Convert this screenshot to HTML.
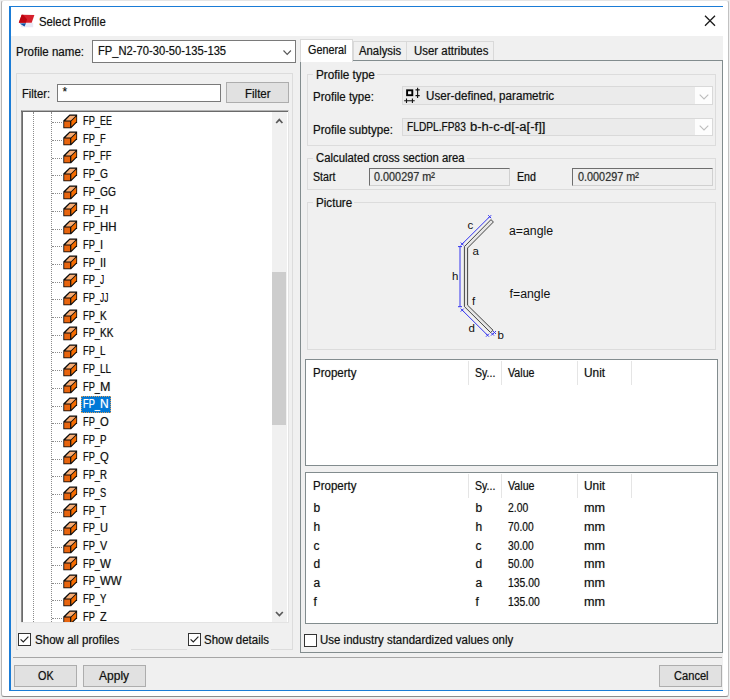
<!DOCTYPE html>
<html lang="en"><head><meta charset="utf-8"><title>Select Profile</title>
<style>
html,body{margin:0;padding:0;}
body{width:730px;height:699px;overflow:hidden;background:#efefef;font-family:"Liberation Sans",sans-serif;font-size:12px;position:relative;}
#frame{position:absolute;left:1px;top:0;width:726px;height:695px;background:#fff;border:1px solid;border-color:#e6e6e6 #c2c2c2 #8c8c8c #b4b4b4;border-radius:3px;}
#win{position:absolute;left:0;top:0;width:730px;height:699px;}
.b{position:absolute;box-sizing:border-box;}
.t{text-shadow:0 0 0.8px rgba(0,0,0,0.42);position:absolute;white-space:nowrap;line-height:16px;height:16px;transform-origin:0 50%;display:block;}
svg{position:absolute;overflow:visible;}
.btn{background:#e1e1e1;border:1px solid #adadad;}
.grp{border:1px solid #dcdcdc;}
.leg{background:#f0f0f0;}
.cb{background:#fff;border:1px solid #333;}
.p{display:inline-block;vertical-align:top;white-space:pre;transform-origin:0 50%;height:16px;line-height:16px;}

</style></head>
<body>
<div id="frame"></div>
<div id="win">
<div class="b " style="left:9.0px;top:6.0px;width:714.3px;height:685.0px;background:#f0f0f0;border-left:2px solid #1b7cd6;border-top:1px solid #1b7cd6;border-bottom:1px solid #1b7cd6;"></div>
<div class="b " style="left:11.0px;top:7.0px;width:712.3px;height:29.3px;background:#fff;"></div>
<svg style="left:18px;top:13px" width="18" height="15" viewBox="0 0 18 15">
<polygon points="2.4,9.8 15.2,9.8 15.2,14.2 3.2,14.2" fill="#e8e8f5"/>
<polygon points="3.66,1.8 16.4,2 13.7,9.7 0.8,9.7" fill="#d6202c"/>
<polygon points="3.66,1.8 5.1,1.8 9,6.3 8,9.7 0.8,9.7" fill="#bd0510"/>
<polygon points="1.6,10.5 8,10.3 6.5,13.5" fill="#0e52a6"/>
</svg>
<span class="t " style="left:39.4px;top:14.0px;font-size:12px;color:#111;transform:scaleX(0.943);">Select Profile</span>
<svg style="left:704px;top:15px" width="12" height="12" viewBox="0 0 12 12"><path d="M1 0.8 L11 10.8 M11 0.8 L1 10.8" stroke="#1a1a1a" stroke-width="1.25" fill="none"/></svg>
<span class="t " style="left:16.4px;top:43.8px;font-size:12px;color:#111;transform:scaleX(0.962);">Profile name:</span>
<div class="b " style="left:91.5px;top:40.2px;width:204.0px;height:22.5px;background:#fff;border:1px solid #7a7a7a;"></div>
<span class="t " style="left:97.5px;top:42.8px;font-size:12px;color:#111;transform:scaleX(0.932);">FP_N2-70-30-50-135-135</span>
<svg style="left:283.2px;top:49.5px" width="9" height="6" viewBox="0 0 9 6"><path d="M0.5 0.5 L4.2 4.4 L7.9 0.5" stroke="#555" stroke-width="1.1" fill="none"/></svg>
<div class="b grp" style="left:16.0px;top:72.5px;width:277.0px;height:577.0px;"></div>
<span class="t " style="left:21.9px;top:85.8px;font-size:12px;color:#111;transform:scaleX(0.933);">Filter:</span>
<div class="b " style="left:57.4px;top:84.0px;width:163.3px;height:17.6px;background:#fff;border:1px solid #7a7a7a;"></div>
<span class="t " style="left:62.5px;top:84.2px;font-size:12px;color:#111;">*</span>
<div class="b btn" style="left:226.3px;top:82.3px;width:62.8px;height:21.1px;"></div>
<span class="t " style="left:245.4px;top:85.5px;font-size:12px;color:#111;transform:scaleX(0.960);">Filter</span>
<div class="b " style="left:20.5px;top:110.2px;width:268.0px;height:512.4px;background:#fff;border:1px solid;border-color:#b4b4b4 #e3e3e3 #e3e3e3 #8a8a8a;"></div>
<div class="b " style="left:20.5px;top:111.2px;width:267.0px;height:1.0px;background:#6a6a6a;"></div>
<div class="b " style="left:21.5px;top:111.2px;width:1.0px;height:510.4px;background:#6a6a6a;"></div>
<div class="b " style="left:271.5px;top:112.2px;width:15.8px;height:509.4px;background:#f0f0f0;"></div>
<div class="b " style="left:271.5px;top:271.8px;width:14.4px;height:152.9px;background:#cdcdcd;"></div>
<svg style="left:274.5px;top:118.2px" width="9" height="6" viewBox="0 0 9 6"><path d="M1.2 5 L4.3 1.6 L7.4 5" stroke="#5a5a5a" stroke-width="1.7" fill="none"/></svg>
<svg style="left:274.6px;top:610.8px" width="9" height="6" viewBox="0 0 9 6"><path d="M1 1 L4.4 4.6 L7.8 1" stroke="#5a5a5a" stroke-width="1.7" fill="none"/></svg>
<div class="b " style="left:32.6px;top:112.2px;width:1.0px;height:509.4px;border-left:1px dotted #8c8c8c;"></div>
<div class="b " style="left:51.4px;top:112.2px;width:1.0px;height:509.4px;border-left:1px dotted #8c8c8c;"></div>
<div class="b " style="left:52.4px;top:122.2px;width:10.0px;height:1.0px;border-top:1px dotted #8c8c8c;"></div>
<svg style="left:62.8px;top:113.7px" width="15" height="15" viewBox="0 0 15 15">
<polygon points="0.3,14.3 0.3,6.6 6.6,0.6 14.1,0.6 14.1,8.3 8.1,14.3" fill="#0c0c0c"/>
<polygon points="1.2,7.5 7.1,7.5 7.1,13.4 1.2,13.4" fill="#e8650e"/>
<polygon points="2.4,6.5 7.0,1.8 12.7,1.8 7.9,6.5" fill="#f8ad74"/>
<polygon points="8.3,7.2 13.3,2.5 13.3,7.6 8.3,12.6" fill="#f56c00"/>
</svg>
<span class="t" style="left:83.2px;top:112.9px;color:#111;"><span class="p" style="width:17.00px;transform:scaleX(0.772)">FP_</span><span class="p" style="width:11.76px;transform:scaleX(0.735)">EE</span></span>
<div class="b " style="left:52.4px;top:139.9px;width:10.0px;height:1.0px;border-top:1px dotted #8c8c8c;"></div>
<svg style="left:62.8px;top:131.4px" width="15" height="15" viewBox="0 0 15 15">
<polygon points="0.3,14.3 0.3,6.6 6.6,0.6 14.1,0.6 14.1,8.3 8.1,14.3" fill="#0c0c0c"/>
<polygon points="1.2,7.5 7.1,7.5 7.1,13.4 1.2,13.4" fill="#e8650e"/>
<polygon points="2.4,6.5 7.0,1.8 12.7,1.8 7.9,6.5" fill="#f8ad74"/>
<polygon points="8.3,7.2 13.3,2.5 13.3,7.6 8.3,12.6" fill="#f56c00"/>
</svg>
<span class="t" style="left:83.2px;top:130.6px;color:#111;"><span class="p" style="width:17.00px;transform:scaleX(0.772)">FP_</span><span class="p" style="width:5.67px;transform:scaleX(0.774)">F</span></span>
<div class="b " style="left:52.4px;top:157.6px;width:10.0px;height:1.0px;border-top:1px dotted #8c8c8c;"></div>
<svg style="left:62.8px;top:149.1px" width="15" height="15" viewBox="0 0 15 15">
<polygon points="0.3,14.3 0.3,6.6 6.6,0.6 14.1,0.6 14.1,8.3 8.1,14.3" fill="#0c0c0c"/>
<polygon points="1.2,7.5 7.1,7.5 7.1,13.4 1.2,13.4" fill="#e8650e"/>
<polygon points="2.4,6.5 7.0,1.8 12.7,1.8 7.9,6.5" fill="#f8ad74"/>
<polygon points="8.3,7.2 13.3,2.5 13.3,7.6 8.3,12.6" fill="#f56c00"/>
</svg>
<span class="t" style="left:83.2px;top:148.3px;color:#111;"><span class="p" style="width:17.00px;transform:scaleX(0.772)">FP_</span><span class="p" style="width:11.34px;transform:scaleX(0.774)">FF</span></span>
<div class="b " style="left:52.4px;top:175.3px;width:10.0px;height:1.0px;border-top:1px dotted #8c8c8c;"></div>
<svg style="left:62.8px;top:166.8px" width="15" height="15" viewBox="0 0 15 15">
<polygon points="0.3,14.3 0.3,6.6 6.6,0.6 14.1,0.6 14.1,8.3 8.1,14.3" fill="#0c0c0c"/>
<polygon points="1.2,7.5 7.1,7.5 7.1,13.4 1.2,13.4" fill="#e8650e"/>
<polygon points="2.4,6.5 7.0,1.8 12.7,1.8 7.9,6.5" fill="#f8ad74"/>
<polygon points="8.3,7.2 13.3,2.5 13.3,7.6 8.3,12.6" fill="#f56c00"/>
</svg>
<span class="t" style="left:83.2px;top:166.0px;color:#111;"><span class="p" style="width:17.00px;transform:scaleX(0.772)">FP_</span><span class="p" style="width:7.97px;transform:scaleX(0.854)">G</span></span>
<div class="b " style="left:52.4px;top:193.0px;width:10.0px;height:1.0px;border-top:1px dotted #8c8c8c;"></div>
<svg style="left:62.8px;top:184.5px" width="15" height="15" viewBox="0 0 15 15">
<polygon points="0.3,14.3 0.3,6.6 6.6,0.6 14.1,0.6 14.1,8.3 8.1,14.3" fill="#0c0c0c"/>
<polygon points="1.2,7.5 7.1,7.5 7.1,13.4 1.2,13.4" fill="#e8650e"/>
<polygon points="2.4,6.5 7.0,1.8 12.7,1.8 7.9,6.5" fill="#f8ad74"/>
<polygon points="8.3,7.2 13.3,2.5 13.3,7.6 8.3,12.6" fill="#f56c00"/>
</svg>
<span class="t" style="left:83.2px;top:183.7px;color:#111;"><span class="p" style="width:17.00px;transform:scaleX(0.772)">FP_</span><span class="p" style="width:15.94px;transform:scaleX(0.854)">GG</span></span>
<div class="b " style="left:52.4px;top:210.8px;width:10.0px;height:1.0px;border-top:1px dotted #8c8c8c;"></div>
<svg style="left:62.8px;top:202.3px" width="15" height="15" viewBox="0 0 15 15">
<polygon points="0.3,14.3 0.3,6.6 6.6,0.6 14.1,0.6 14.1,8.3 8.1,14.3" fill="#0c0c0c"/>
<polygon points="1.2,7.5 7.1,7.5 7.1,13.4 1.2,13.4" fill="#e8650e"/>
<polygon points="2.4,6.5 7.0,1.8 12.7,1.8 7.9,6.5" fill="#f8ad74"/>
<polygon points="8.3,7.2 13.3,2.5 13.3,7.6 8.3,12.6" fill="#f56c00"/>
</svg>
<span class="t" style="left:83.2px;top:201.5px;color:#111;"><span class="p" style="width:17.00px;transform:scaleX(0.772)">FP_</span><span class="p" style="width:8.25px;transform:scaleX(0.952)">H</span></span>
<div class="b " style="left:52.4px;top:228.5px;width:10.0px;height:1.0px;border-top:1px dotted #8c8c8c;"></div>
<svg style="left:62.8px;top:220.0px" width="15" height="15" viewBox="0 0 15 15">
<polygon points="0.3,14.3 0.3,6.6 6.6,0.6 14.1,0.6 14.1,8.3 8.1,14.3" fill="#0c0c0c"/>
<polygon points="1.2,7.5 7.1,7.5 7.1,13.4 1.2,13.4" fill="#e8650e"/>
<polygon points="2.4,6.5 7.0,1.8 12.7,1.8 7.9,6.5" fill="#f8ad74"/>
<polygon points="8.3,7.2 13.3,2.5 13.3,7.6 8.3,12.6" fill="#f56c00"/>
</svg>
<span class="t" style="left:83.2px;top:219.2px;color:#111;"><span class="p" style="width:17.00px;transform:scaleX(0.772)">FP_</span><span class="p" style="width:16.50px;transform:scaleX(0.952)">HH</span></span>
<div class="b " style="left:52.4px;top:246.2px;width:10.0px;height:1.0px;border-top:1px dotted #8c8c8c;"></div>
<svg style="left:62.8px;top:237.7px" width="15" height="15" viewBox="0 0 15 15">
<polygon points="0.3,14.3 0.3,6.6 6.6,0.6 14.1,0.6 14.1,8.3 8.1,14.3" fill="#0c0c0c"/>
<polygon points="1.2,7.5 7.1,7.5 7.1,13.4 1.2,13.4" fill="#e8650e"/>
<polygon points="2.4,6.5 7.0,1.8 12.7,1.8 7.9,6.5" fill="#f8ad74"/>
<polygon points="8.3,7.2 13.3,2.5 13.3,7.6 8.3,12.6" fill="#f56c00"/>
</svg>
<span class="t" style="left:83.2px;top:236.9px;color:#111;"><span class="p" style="width:17.00px;transform:scaleX(0.772)">FP_</span><span class="p" style="width:3.09px;transform:scaleX(0.927)">I</span></span>
<div class="b " style="left:52.4px;top:263.9px;width:10.0px;height:1.0px;border-top:1px dotted #8c8c8c;"></div>
<svg style="left:62.8px;top:255.4px" width="15" height="15" viewBox="0 0 15 15">
<polygon points="0.3,14.3 0.3,6.6 6.6,0.6 14.1,0.6 14.1,8.3 8.1,14.3" fill="#0c0c0c"/>
<polygon points="1.2,7.5 7.1,7.5 7.1,13.4 1.2,13.4" fill="#e8650e"/>
<polygon points="2.4,6.5 7.0,1.8 12.7,1.8 7.9,6.5" fill="#f8ad74"/>
<polygon points="8.3,7.2 13.3,2.5 13.3,7.6 8.3,12.6" fill="#f56c00"/>
</svg>
<span class="t" style="left:83.2px;top:254.6px;color:#111;"><span class="p" style="width:17.00px;transform:scaleX(0.772)">FP_</span><span class="p" style="width:6.18px;transform:scaleX(0.927)">II</span></span>
<div class="b " style="left:52.4px;top:281.6px;width:10.0px;height:1.0px;border-top:1px dotted #8c8c8c;"></div>
<svg style="left:62.8px;top:273.1px" width="15" height="15" viewBox="0 0 15 15">
<polygon points="0.3,14.3 0.3,6.6 6.6,0.6 14.1,0.6 14.1,8.3 8.1,14.3" fill="#0c0c0c"/>
<polygon points="1.2,7.5 7.1,7.5 7.1,13.4 1.2,13.4" fill="#e8650e"/>
<polygon points="2.4,6.5 7.0,1.8 12.7,1.8 7.9,6.5" fill="#f8ad74"/>
<polygon points="8.3,7.2 13.3,2.5 13.3,7.6 8.3,12.6" fill="#f56c00"/>
</svg>
<span class="t" style="left:83.2px;top:272.3px;color:#111;"><span class="p" style="width:17.00px;transform:scaleX(0.772)">FP_</span><span class="p" style="width:4.15px;transform:scaleX(0.691)">J</span></span>
<div class="b " style="left:52.4px;top:299.3px;width:10.0px;height:1.0px;border-top:1px dotted #8c8c8c;"></div>
<svg style="left:62.8px;top:290.8px" width="15" height="15" viewBox="0 0 15 15">
<polygon points="0.3,14.3 0.3,6.6 6.6,0.6 14.1,0.6 14.1,8.3 8.1,14.3" fill="#0c0c0c"/>
<polygon points="1.2,7.5 7.1,7.5 7.1,13.4 1.2,13.4" fill="#e8650e"/>
<polygon points="2.4,6.5 7.0,1.8 12.7,1.8 7.9,6.5" fill="#f8ad74"/>
<polygon points="8.3,7.2 13.3,2.5 13.3,7.6 8.3,12.6" fill="#f56c00"/>
</svg>
<span class="t" style="left:83.2px;top:290.0px;color:#111;"><span class="p" style="width:17.00px;transform:scaleX(0.772)">FP_</span><span class="p" style="width:8.30px;transform:scaleX(0.691)">JJ</span></span>
<div class="b " style="left:52.4px;top:317.0px;width:10.0px;height:1.0px;border-top:1px dotted #8c8c8c;"></div>
<svg style="left:62.8px;top:308.5px" width="15" height="15" viewBox="0 0 15 15">
<polygon points="0.3,14.3 0.3,6.6 6.6,0.6 14.1,0.6 14.1,8.3 8.1,14.3" fill="#0c0c0c"/>
<polygon points="1.2,7.5 7.1,7.5 7.1,13.4 1.2,13.4" fill="#e8650e"/>
<polygon points="2.4,6.5 7.0,1.8 12.7,1.8 7.9,6.5" fill="#f8ad74"/>
<polygon points="8.3,7.2 13.3,2.5 13.3,7.6 8.3,12.6" fill="#f56c00"/>
</svg>
<span class="t" style="left:83.2px;top:307.7px;color:#111;"><span class="p" style="width:17.00px;transform:scaleX(0.772)">FP_</span><span class="p" style="width:6.74px;transform:scaleX(0.842)">K</span></span>
<div class="b " style="left:52.4px;top:334.7px;width:10.0px;height:1.0px;border-top:1px dotted #8c8c8c;"></div>
<svg style="left:62.8px;top:326.2px" width="15" height="15" viewBox="0 0 15 15">
<polygon points="0.3,14.3 0.3,6.6 6.6,0.6 14.1,0.6 14.1,8.3 8.1,14.3" fill="#0c0c0c"/>
<polygon points="1.2,7.5 7.1,7.5 7.1,13.4 1.2,13.4" fill="#e8650e"/>
<polygon points="2.4,6.5 7.0,1.8 12.7,1.8 7.9,6.5" fill="#f8ad74"/>
<polygon points="8.3,7.2 13.3,2.5 13.3,7.6 8.3,12.6" fill="#f56c00"/>
</svg>
<span class="t" style="left:83.2px;top:325.4px;color:#111;"><span class="p" style="width:17.00px;transform:scaleX(0.772)">FP_</span><span class="p" style="width:13.48px;transform:scaleX(0.842)">KK</span></span>
<div class="b " style="left:52.4px;top:352.4px;width:10.0px;height:1.0px;border-top:1px dotted #8c8c8c;"></div>
<svg style="left:62.8px;top:343.9px" width="15" height="15" viewBox="0 0 15 15">
<polygon points="0.3,14.3 0.3,6.6 6.6,0.6 14.1,0.6 14.1,8.3 8.1,14.3" fill="#0c0c0c"/>
<polygon points="1.2,7.5 7.1,7.5 7.1,13.4 1.2,13.4" fill="#e8650e"/>
<polygon points="2.4,6.5 7.0,1.8 12.7,1.8 7.9,6.5" fill="#f8ad74"/>
<polygon points="8.3,7.2 13.3,2.5 13.3,7.6 8.3,12.6" fill="#f56c00"/>
</svg>
<span class="t" style="left:83.2px;top:343.1px;color:#111;"><span class="p" style="width:17.00px;transform:scaleX(0.772)">FP_</span><span class="p" style="width:5.46px;transform:scaleX(0.818)">L</span></span>
<div class="b " style="left:52.4px;top:370.1px;width:10.0px;height:1.0px;border-top:1px dotted #8c8c8c;"></div>
<svg style="left:62.8px;top:361.6px" width="15" height="15" viewBox="0 0 15 15">
<polygon points="0.3,14.3 0.3,6.6 6.6,0.6 14.1,0.6 14.1,8.3 8.1,14.3" fill="#0c0c0c"/>
<polygon points="1.2,7.5 7.1,7.5 7.1,13.4 1.2,13.4" fill="#e8650e"/>
<polygon points="2.4,6.5 7.0,1.8 12.7,1.8 7.9,6.5" fill="#f8ad74"/>
<polygon points="8.3,7.2 13.3,2.5 13.3,7.6 8.3,12.6" fill="#f56c00"/>
</svg>
<span class="t" style="left:83.2px;top:360.8px;color:#111;"><span class="p" style="width:17.00px;transform:scaleX(0.772)">FP_</span><span class="p" style="width:10.92px;transform:scaleX(0.818)">LL</span></span>
<div class="b " style="left:52.4px;top:387.9px;width:10.0px;height:1.0px;border-top:1px dotted #8c8c8c;"></div>
<svg style="left:62.8px;top:379.4px" width="15" height="15" viewBox="0 0 15 15">
<polygon points="0.3,14.3 0.3,6.6 6.6,0.6 14.1,0.6 14.1,8.3 8.1,14.3" fill="#0c0c0c"/>
<polygon points="1.2,7.5 7.1,7.5 7.1,13.4 1.2,13.4" fill="#e8650e"/>
<polygon points="2.4,6.5 7.0,1.8 12.7,1.8 7.9,6.5" fill="#f8ad74"/>
<polygon points="8.3,7.2 13.3,2.5 13.3,7.6 8.3,12.6" fill="#f56c00"/>
</svg>
<span class="t" style="left:83.2px;top:378.6px;color:#111;"><span class="p" style="width:17.00px;transform:scaleX(0.772)">FP_</span><span class="p" style="width:10.43px;transform:scaleX(1.044)">M</span></span>
<div class="b " style="left:52.4px;top:405.6px;width:10.0px;height:1.0px;border-top:1px dotted #8c8c8c;"></div>
<svg style="left:62.8px;top:397.1px" width="15" height="15" viewBox="0 0 15 15">
<polygon points="0.3,14.3 0.3,6.6 6.6,0.6 14.1,0.6 14.1,8.3 8.1,14.3" fill="#0c0c0c"/>
<polygon points="1.2,7.5 7.1,7.5 7.1,13.4 1.2,13.4" fill="#e8650e"/>
<polygon points="2.4,6.5 7.0,1.8 12.7,1.8 7.9,6.5" fill="#f8ad74"/>
<polygon points="8.3,7.2 13.3,2.5 13.3,7.6 8.3,12.6" fill="#f56c00"/>
</svg>
<div class="b " style="left:81.0px;top:395.9px;width:29.8px;height:16.8px;background:#0078d7;border:1px dotted #d8a060;"></div>
<span class="t" style="left:83.2px;top:396.3px;color:#fff;text-shadow:0 0 0.8px rgba(255,255,255,0.6);"><span class="p" style="width:17.00px;transform:scaleX(0.772)">FP_</span><span class="p" style="width:8.69px;transform:scaleX(1.003)">N</span></span>
<div class="b " style="left:52.4px;top:423.3px;width:10.0px;height:1.0px;border-top:1px dotted #8c8c8c;"></div>
<svg style="left:62.8px;top:414.8px" width="15" height="15" viewBox="0 0 15 15">
<polygon points="0.3,14.3 0.3,6.6 6.6,0.6 14.1,0.6 14.1,8.3 8.1,14.3" fill="#0c0c0c"/>
<polygon points="1.2,7.5 7.1,7.5 7.1,13.4 1.2,13.4" fill="#e8650e"/>
<polygon points="2.4,6.5 7.0,1.8 12.7,1.8 7.9,6.5" fill="#f8ad74"/>
<polygon points="8.3,7.2 13.3,2.5 13.3,7.6 8.3,12.6" fill="#f56c00"/>
</svg>
<span class="t" style="left:83.2px;top:414.0px;color:#111;"><span class="p" style="width:17.00px;transform:scaleX(0.772)">FP_</span><span class="p" style="width:8.76px;transform:scaleX(0.939)">O</span></span>
<div class="b " style="left:52.4px;top:441.0px;width:10.0px;height:1.0px;border-top:1px dotted #8c8c8c;"></div>
<svg style="left:62.8px;top:432.5px" width="15" height="15" viewBox="0 0 15 15">
<polygon points="0.3,14.3 0.3,6.6 6.6,0.6 14.1,0.6 14.1,8.3 8.1,14.3" fill="#0c0c0c"/>
<polygon points="1.2,7.5 7.1,7.5 7.1,13.4 1.2,13.4" fill="#e8650e"/>
<polygon points="2.4,6.5 7.0,1.8 12.7,1.8 7.9,6.5" fill="#f8ad74"/>
<polygon points="8.3,7.2 13.3,2.5 13.3,7.6 8.3,12.6" fill="#f56c00"/>
</svg>
<span class="t" style="left:83.2px;top:431.7px;color:#111;"><span class="p" style="width:17.00px;transform:scaleX(0.772)">FP_</span><span class="p" style="width:6.51px;transform:scaleX(0.813)">P</span></span>
<div class="b " style="left:52.4px;top:458.7px;width:10.0px;height:1.0px;border-top:1px dotted #8c8c8c;"></div>
<svg style="left:62.8px;top:450.2px" width="15" height="15" viewBox="0 0 15 15">
<polygon points="0.3,14.3 0.3,6.6 6.6,0.6 14.1,0.6 14.1,8.3 8.1,14.3" fill="#0c0c0c"/>
<polygon points="1.2,7.5 7.1,7.5 7.1,13.4 1.2,13.4" fill="#e8650e"/>
<polygon points="2.4,6.5 7.0,1.8 12.7,1.8 7.9,6.5" fill="#f8ad74"/>
<polygon points="8.3,7.2 13.3,2.5 13.3,7.6 8.3,12.6" fill="#f56c00"/>
</svg>
<span class="t" style="left:83.2px;top:449.4px;color:#111;"><span class="p" style="width:17.00px;transform:scaleX(0.772)">FP_</span><span class="p" style="width:8.76px;transform:scaleX(0.939)">Q</span></span>
<div class="b " style="left:52.4px;top:476.4px;width:10.0px;height:1.0px;border-top:1px dotted #8c8c8c;"></div>
<svg style="left:62.8px;top:467.9px" width="15" height="15" viewBox="0 0 15 15">
<polygon points="0.3,14.3 0.3,6.6 6.6,0.6 14.1,0.6 14.1,8.3 8.1,14.3" fill="#0c0c0c"/>
<polygon points="1.2,7.5 7.1,7.5 7.1,13.4 1.2,13.4" fill="#e8650e"/>
<polygon points="2.4,6.5 7.0,1.8 12.7,1.8 7.9,6.5" fill="#f8ad74"/>
<polygon points="8.3,7.2 13.3,2.5 13.3,7.6 8.3,12.6" fill="#f56c00"/>
</svg>
<span class="t" style="left:83.2px;top:467.1px;color:#111;"><span class="p" style="width:17.00px;transform:scaleX(0.772)">FP_</span><span class="p" style="width:6.96px;transform:scaleX(0.803)">R</span></span>
<div class="b " style="left:52.4px;top:494.1px;width:10.0px;height:1.0px;border-top:1px dotted #8c8c8c;"></div>
<svg style="left:62.8px;top:485.6px" width="15" height="15" viewBox="0 0 15 15">
<polygon points="0.3,14.3 0.3,6.6 6.6,0.6 14.1,0.6 14.1,8.3 8.1,14.3" fill="#0c0c0c"/>
<polygon points="1.2,7.5 7.1,7.5 7.1,13.4 1.2,13.4" fill="#e8650e"/>
<polygon points="2.4,6.5 7.0,1.8 12.7,1.8 7.9,6.5" fill="#f8ad74"/>
<polygon points="8.3,7.2 13.3,2.5 13.3,7.6 8.3,12.6" fill="#f56c00"/>
</svg>
<span class="t" style="left:83.2px;top:484.8px;color:#111;"><span class="p" style="width:17.00px;transform:scaleX(0.772)">FP_</span><span class="p" style="width:6.17px;transform:scaleX(0.771)">S</span></span>
<div class="b " style="left:52.4px;top:511.8px;width:10.0px;height:1.0px;border-top:1px dotted #8c8c8c;"></div>
<svg style="left:62.8px;top:503.3px" width="15" height="15" viewBox="0 0 15 15">
<polygon points="0.3,14.3 0.3,6.6 6.6,0.6 14.1,0.6 14.1,8.3 8.1,14.3" fill="#0c0c0c"/>
<polygon points="1.2,7.5 7.1,7.5 7.1,13.4 1.2,13.4" fill="#e8650e"/>
<polygon points="2.4,6.5 7.0,1.8 12.7,1.8 7.9,6.5" fill="#f8ad74"/>
<polygon points="8.3,7.2 13.3,2.5 13.3,7.6 8.3,12.6" fill="#f56c00"/>
</svg>
<span class="t" style="left:83.2px;top:502.5px;color:#111;"><span class="p" style="width:17.00px;transform:scaleX(0.772)">FP_</span><span class="p" style="width:6.09px;transform:scaleX(0.831)">T</span></span>
<div class="b " style="left:52.4px;top:529.5px;width:10.0px;height:1.0px;border-top:1px dotted #8c8c8c;"></div>
<svg style="left:62.8px;top:521.0px" width="15" height="15" viewBox="0 0 15 15">
<polygon points="0.3,14.3 0.3,6.6 6.6,0.6 14.1,0.6 14.1,8.3 8.1,14.3" fill="#0c0c0c"/>
<polygon points="1.2,7.5 7.1,7.5 7.1,13.4 1.2,13.4" fill="#e8650e"/>
<polygon points="2.4,6.5 7.0,1.8 12.7,1.8 7.9,6.5" fill="#f8ad74"/>
<polygon points="8.3,7.2 13.3,2.5 13.3,7.6 8.3,12.6" fill="#f56c00"/>
</svg>
<span class="t" style="left:83.2px;top:520.2px;color:#111;"><span class="p" style="width:17.00px;transform:scaleX(0.772)">FP_</span><span class="p" style="width:7.98px;transform:scaleX(0.921)">U</span></span>
<div class="b " style="left:52.4px;top:547.2px;width:10.0px;height:1.0px;border-top:1px dotted #8c8c8c;"></div>
<svg style="left:62.8px;top:538.7px" width="15" height="15" viewBox="0 0 15 15">
<polygon points="0.3,14.3 0.3,6.6 6.6,0.6 14.1,0.6 14.1,8.3 8.1,14.3" fill="#0c0c0c"/>
<polygon points="1.2,7.5 7.1,7.5 7.1,13.4 1.2,13.4" fill="#e8650e"/>
<polygon points="2.4,6.5 7.0,1.8 12.7,1.8 7.9,6.5" fill="#f8ad74"/>
<polygon points="8.3,7.2 13.3,2.5 13.3,7.6 8.3,12.6" fill="#f56c00"/>
</svg>
<span class="t" style="left:83.2px;top:537.9px;color:#111;"><span class="p" style="width:17.00px;transform:scaleX(0.772)">FP_</span><span class="p" style="width:7.22px;transform:scaleX(0.901)">V</span></span>
<div class="b " style="left:52.4px;top:564.9px;width:10.0px;height:1.0px;border-top:1px dotted #8c8c8c;"></div>
<svg style="left:62.8px;top:556.4px" width="15" height="15" viewBox="0 0 15 15">
<polygon points="0.3,14.3 0.3,6.6 6.6,0.6 14.1,0.6 14.1,8.3 8.1,14.3" fill="#0c0c0c"/>
<polygon points="1.2,7.5 7.1,7.5 7.1,13.4 1.2,13.4" fill="#e8650e"/>
<polygon points="2.4,6.5 7.0,1.8 12.7,1.8 7.9,6.5" fill="#f8ad74"/>
<polygon points="8.3,7.2 13.3,2.5 13.3,7.6 8.3,12.6" fill="#f56c00"/>
</svg>
<span class="t" style="left:83.2px;top:555.6px;color:#111;"><span class="p" style="width:17.00px;transform:scaleX(0.772)">FP_</span><span class="p" style="width:10.86px;transform:scaleX(0.959)">W</span></span>
<div class="b " style="left:52.4px;top:582.7px;width:10.0px;height:1.0px;border-top:1px dotted #8c8c8c;"></div>
<svg style="left:62.8px;top:574.2px" width="15" height="15" viewBox="0 0 15 15">
<polygon points="0.3,14.3 0.3,6.6 6.6,0.6 14.1,0.6 14.1,8.3 8.1,14.3" fill="#0c0c0c"/>
<polygon points="1.2,7.5 7.1,7.5 7.1,13.4 1.2,13.4" fill="#e8650e"/>
<polygon points="2.4,6.5 7.0,1.8 12.7,1.8 7.9,6.5" fill="#f8ad74"/>
<polygon points="8.3,7.2 13.3,2.5 13.3,7.6 8.3,12.6" fill="#f56c00"/>
</svg>
<span class="t" style="left:83.2px;top:573.4px;color:#111;"><span class="p" style="width:17.00px;transform:scaleX(0.772)">FP_</span><span class="p" style="width:21.73px;transform:scaleX(0.959)">WW</span></span>
<div class="b " style="left:52.4px;top:600.4px;width:10.0px;height:1.0px;border-top:1px dotted #8c8c8c;"></div>
<svg style="left:62.8px;top:591.9px" width="15" height="15" viewBox="0 0 15 15">
<polygon points="0.3,14.3 0.3,6.6 6.6,0.6 14.1,0.6 14.1,8.3 8.1,14.3" fill="#0c0c0c"/>
<polygon points="1.2,7.5 7.1,7.5 7.1,13.4 1.2,13.4" fill="#e8650e"/>
<polygon points="2.4,6.5 7.0,1.8 12.7,1.8 7.9,6.5" fill="#f8ad74"/>
<polygon points="8.3,7.2 13.3,2.5 13.3,7.6 8.3,12.6" fill="#f56c00"/>
</svg>
<span class="t" style="left:83.2px;top:591.1px;color:#111;"><span class="p" style="width:17.00px;transform:scaleX(0.772)">FP_</span><span class="p" style="width:6.43px;transform:scaleX(0.803)">Y</span></span>
<div class="b " style="left:52.4px;top:618.1px;width:10.0px;height:1.0px;border-top:1px dotted #8c8c8c;"></div>
<svg style="left:62.8px;top:609.6px" width="15" height="15" viewBox="0 0 15 15">
<polygon points="0.3,14.3 0.3,6.6 6.6,0.6 14.1,0.6 14.1,8.3 8.1,14.3" fill="#0c0c0c"/>
<polygon points="1.2,7.5 7.1,7.5 7.1,13.4 1.2,13.4" fill="#e8650e"/>
<polygon points="2.4,6.5 7.0,1.8 12.7,1.8 7.9,6.5" fill="#f8ad74"/>
<polygon points="8.3,7.2 13.3,2.5 13.3,7.6 8.3,12.6" fill="#f56c00"/>
</svg>
<span class="t" style="left:83.2px;top:608.8px;color:#111;"><span class="p" style="width:17.00px;transform:scaleX(0.772)">FP_</span><span class="p" style="width:6.62px;transform:scaleX(0.904)">Z</span></span>
<div class="b " style="left:17.0px;top:622.6px;width:275.0px;height:11.0px;background:#f0f0f0;"></div>
<div class="b " style="left:20.5px;top:621.6px;width:268.0px;height:1.0px;background:#e3e3e3;"></div>
<div class="b " style="left:17.5px;top:631.0px;width:113.5px;height:18.5px;background:#f0f0f0;"></div>
<div class="b " style="left:187.0px;top:631.0px;width:84.0px;height:18.5px;background:#f0f0f0;"></div>
<div class="b cb" style="left:18.4px;top:633.0px;width:13.0px;height:13.0px;"></div>
<svg style="left:18.4px;top:633.0px" width="13" height="13" viewBox="0 0 13 13"><path d="M2.6 6.3 L5.3 9 L10.4 3.6" stroke="#222" stroke-width="1.2" fill="none"/></svg>
<span class="t " style="left:34.7px;top:631.8px;font-size:12px;color:#111;transform:scaleX(0.965);">Show all profiles</span>
<div class="b cb" style="left:188.0px;top:633.0px;width:13.0px;height:13.0px;"></div>
<svg style="left:188.0px;top:633.0px" width="13" height="13" viewBox="0 0 13 13"><path d="M2.6 6.3 L5.3 9 L10.4 3.6" stroke="#222" stroke-width="1.2" fill="none"/></svg>
<span class="t " style="left:203.8px;top:631.8px;font-size:12px;color:#111;transform:scaleX(0.955);">Show details</span>
<div class="b " style="left:12.5px;top:657.2px;width:709.0px;height:1.0px;background:#a6a6a6;"></div>
<div class="b btn" style="left:14.0px;top:664.8px;width:62.5px;height:22.0px;"></div>
<span class="t " style="left:37.7px;top:667.6px;font-size:12px;color:#111;transform:scaleX(0.900);">OK</span>
<div class="b btn" style="left:82.9px;top:664.8px;width:62.7px;height:22.0px;"></div>
<span class="t " style="left:98.9px;top:667.6px;font-size:12px;color:#111;transform:scaleX(1.003);">Apply</span>
<div class="b btn" style="left:659.2px;top:664.8px;width:62.7px;height:22.0px;"></div>
<span class="t " style="left:673.7px;top:667.6px;font-size:12px;color:#111;transform:scaleX(0.926);">Cancel</span>
<div class="b " style="left:300.3px;top:60.2px;width:422.5px;height:592.7px;border:1px solid #828c8e;background:#f0f0f0;"></div>
<div class="b " style="left:353.0px;top:41.3px;width:54.0px;height:19.0px;border:1px solid #d9d9d9;border-bottom:none;background:#f0f0f0;"></div>
<div class="b " style="left:406.0px;top:41.3px;width:87.6px;height:19.0px;border:1px solid #d9d9d9;border-bottom:none;background:#f0f0f0;"></div>
<div class="b " style="left:300.3px;top:38.9px;width:53.2px;height:23.0px;border:1px solid #d9d9d9;border-bottom:none;background:#fff;"></div>
<span class="t " style="left:307.6px;top:42.0px;font-size:12px;color:#111;transform:scaleX(0.899);">General</span>
<span class="t " style="left:359.3px;top:43.0px;font-size:12px;color:#111;transform:scaleX(0.944);">Analysis</span>
<span class="t " style="left:413.6px;top:43.0px;font-size:12px;color:#111;transform:scaleX(0.953);">User attributes</span>
<div class="b grp" style="left:307.0px;top:74.2px;width:409.0px;height:71.8px;"></div>
<div class="b leg" style="left:313.0px;top:66.0px;width:63.5px;height:16.0px;"></div>
<span class="t " style="left:316.2px;top:66.5px;font-size:12px;color:#111;transform:scaleX(0.980);">Profile type</span>
<span class="t " style="left:312.7px;top:89.4px;font-size:12px;color:#111;transform:scaleX(0.961);">Profile type:</span>
<div class="b " style="left:401.5px;top:85.7px;width:311.5px;height:19.8px;background:#ebebeb;border:1px solid #d9d9d9;"></div>
<div class="b " style="left:694.5px;top:86.7px;width:17.5px;height:17.8px;background:#fdfdfd;"></div>
<svg style="left:698.5px;top:93.5px" width="10" height="6" viewBox="0 0 10 6"><path d="M0.7 0.6 L5 4.9 L9.3 0.6" stroke="#bdbdbd" stroke-width="1.1" fill="none"/></svg>
<svg style="left:403px;top:86px" width="18" height="18" viewBox="403 86 18 18">
<rect x="407.1" y="90.3" width="5.2" height="4.9" fill="#f4f4f4" stroke="#000" stroke-width="1.9"/>
<path d="M417.6 87.8 V98.1 M415.5 89.9 H419.7 M415.5 95.6 H419.7 M404.2 100.7 H414.7 M406.5 98.5 V103 M412.4 98.5 V103" stroke="#111" stroke-width="1.1" fill="none"/>
</svg>
<span class="t " style="left:425.6px;top:88.3px;font-size:12px;color:#111;transform:scaleX(0.970);">User-defined, parametric</span>
<span class="t " style="left:312.7px;top:122.0px;font-size:12px;color:#111;transform:scaleX(0.966);">Profile subtype:</span>
<div class="b " style="left:401.5px;top:118.2px;width:311.5px;height:18.3px;background:#ebebeb;border:1px solid #d9d9d9;"></div>
<div class="b " style="left:694.5px;top:119.2px;width:17.5px;height:16.3px;background:#fdfdfd;"></div>
<svg style="left:698.5px;top:125px" width="10" height="6" viewBox="0 0 10 6"><path d="M0.7 0.6 L5 4.9 L9.3 0.6" stroke="#bdbdbd" stroke-width="1.1" fill="none"/></svg>
<span class="t" style="left:406.6px;top:118.8px;color:#111;"><span class="p" style="width:58.80px;transform:scaleX(0.848)">FLDPL.FP83</span><span class="p" style="width:4.80px;transform:scaleX(1.440)"> </span><span class="p" style="width:75.40px;transform:scaleX(1.087)">b-h-c-d[-a[-f]]</span></span>
<div class="b grp" style="left:307.0px;top:158.0px;width:409.0px;height:31.8px;"></div>
<div class="b leg" style="left:313.0px;top:150.0px;width:153.5px;height:16.0px;"></div>
<span class="t " style="left:316.2px;top:150.0px;font-size:12px;color:#111;transform:scaleX(0.944);">Calculated cross section area</span>
<span class="t " style="left:312.9px;top:168.6px;font-size:12px;color:#111;transform:scaleX(0.888);">Start</span>
<div class="b " style="left:369.0px;top:167.9px;width:140.5px;height:18.0px;background:#efefef;border:1px solid;border-color:#6e6e6e #d0d0d0 #d0d0d0 #6e6e6e;"></div>
<span class="t" style="left:374.2px;top:168.6px;color:#333;"><span class="p" style="width:57.30px;transform:scaleX(0.904)">0.000297 m</span><span class="p" style="width:3.90px;font-size:14px;transform:scaleX(0.836)">²</span></span>
<span class="t " style="left:516.6px;top:168.6px;font-size:12px;color:#111;transform:scaleX(0.890);">End</span>
<div class="b " style="left:572.4px;top:167.9px;width:140.5px;height:18.0px;background:#efefef;border:1px solid;border-color:#6e6e6e #d0d0d0 #d0d0d0 #6e6e6e;"></div>
<span class="t" style="left:577.6px;top:168.6px;color:#333;"><span class="p" style="width:57.30px;transform:scaleX(0.904)">0.000297 m</span><span class="p" style="width:3.90px;font-size:14px;transform:scaleX(0.836)">²</span></span>
<div class="b grp" style="left:307.0px;top:202.0px;width:409.0px;height:147.6px;"></div>
<div class="b leg" style="left:313.0px;top:194.5px;width:41.0px;height:16.0px;"></div>
<span class="t " style="left:316.2px;top:194.6px;font-size:12px;color:#111;transform:scaleX(0.969);">Picture</span>
<svg style="left:430px;top:200px" width="140" height="150" viewBox="0 0 140 150">
<g fill="none" stroke="#3434f0" stroke-width="1">
<path d="M32.2 44 L59.7 16.7"/><path d="M30 46.6 L30 106.7"/><path d="M32.2 110.1 L57.5 135.2"/>
<path d="M58.2 15.2 L61.2 18.2 M58.2 18.2 L61.2 15.2 M30.7 42.5 L33.7 45.5 M30.7 45.5 L33.7 42.5"/>
<path d="M28 46.6 L32 46.6 M28 106.7 L32 106.7"/>
<path d="M30.7 108.6 L33.7 111.6 M30.7 111.6 L33.7 108.6 M56 133.7 L59 136.7 M56 136.7 L59 133.7"/>
<path d="M61 132.6 L64 135.6 M61 135.6 L64 132.6 M63 131 L66 134 M63 134 L66 131"/>
</g>
<path d="M61 19.6 L63.4 22 L37.6 48 L37.6 105.2 L63 130.2 L60.6 132.6 L34.4 106.6 L34.4 46.6 Z" fill="#e6e6e6" stroke="#262626" stroke-width="0.85"/>
<g font-family="Liberation Sans, sans-serif" font-size="11.5" fill="#111">
<text x="37.6" y="29">c</text><text x="42.6" y="54.6">a</text><text x="22" y="80">h</text><text x="42" y="105">f</text><text x="38.6" y="132">d</text><text x="67.5" y="138.6">b</text>
<text x="79" y="35" font-size="12.3">a=angle</text><text x="79.6" y="98" font-size="12.3">f=angle</text>
</g>
</svg>
<div class="b " style="left:305.0px;top:359.0px;width:413.3px;height:107.4px;background:#fff;border:1px solid #828c8e;"></div>
<div class="b " style="left:468.4px;top:360.5px;width:1.0px;height:24.0px;background:#e5e5e5;"></div>
<div class="b " style="left:501.0px;top:360.5px;width:1.0px;height:24.0px;background:#e5e5e5;"></div>
<div class="b " style="left:576.9px;top:360.5px;width:1.0px;height:24.0px;background:#e5e5e5;"></div>
<div class="b " style="left:631.2px;top:360.5px;width:1.0px;height:24.0px;background:#e5e5e5;"></div>
<span class="t " style="left:312.7px;top:365.0px;font-size:12px;color:#111;transform:scaleX(0.959);">Property</span>
<span class="t " style="left:475.4px;top:365.0px;font-size:12px;color:#111;transform:scaleX(0.882);">Sy...</span>
<span class="t " style="left:508.2px;top:365.0px;font-size:12px;color:#111;transform:scaleX(0.889);">Value</span>
<span class="t " style="left:583.6px;top:365.0px;font-size:12px;color:#111;transform:scaleX(0.989);">Unit</span>
<div class="b " style="left:305.0px;top:472.4px;width:413.3px;height:151.3px;background:#fff;border:1px solid #828c8e;"></div>
<div class="b " style="left:468.4px;top:473.9px;width:1.0px;height:24.0px;background:#e5e5e5;"></div>
<div class="b " style="left:501.0px;top:473.9px;width:1.0px;height:24.0px;background:#e5e5e5;"></div>
<div class="b " style="left:576.9px;top:473.9px;width:1.0px;height:24.0px;background:#e5e5e5;"></div>
<div class="b " style="left:631.2px;top:473.9px;width:1.0px;height:24.0px;background:#e5e5e5;"></div>
<span class="t " style="left:312.7px;top:477.8px;font-size:12px;color:#111;transform:scaleX(0.959);">Property</span>
<span class="t " style="left:475.4px;top:477.8px;font-size:12px;color:#111;transform:scaleX(0.882);">Sy...</span>
<span class="t " style="left:508.2px;top:477.8px;font-size:12px;color:#111;transform:scaleX(0.889);">Value</span>
<span class="t " style="left:583.6px;top:477.8px;font-size:12px;color:#111;transform:scaleX(0.989);">Unit</span>
<span class="t " style="left:313.4px;top:500.0px;font-size:12px;color:#111;">b</span>
<span class="t " style="left:475.6px;top:500.0px;font-size:12px;color:#111;">b</span>
<span class="t " style="left:508.2px;top:500.0px;font-size:12px;color:#111;transform:scaleX(0.865);">2.00</span>
<span class="t " style="left:583.6px;top:500.0px;font-size:12px;color:#111;transform:scaleX(1.055);">mm</span>
<span class="t " style="left:313.4px;top:518.8px;font-size:12px;color:#111;">h</span>
<span class="t " style="left:475.6px;top:518.8px;font-size:12px;color:#111;">h</span>
<span class="t " style="left:508.2px;top:518.8px;font-size:12px;color:#111;transform:scaleX(0.853);">70.00</span>
<span class="t " style="left:583.6px;top:518.8px;font-size:12px;color:#111;transform:scaleX(1.055);">mm</span>
<span class="t " style="left:313.4px;top:537.5px;font-size:12px;color:#111;">c</span>
<span class="t " style="left:475.6px;top:537.5px;font-size:12px;color:#111;">c</span>
<span class="t " style="left:508.2px;top:537.5px;font-size:12px;color:#111;transform:scaleX(0.853);">30.00</span>
<span class="t " style="left:583.6px;top:537.5px;font-size:12px;color:#111;transform:scaleX(1.055);">mm</span>
<span class="t " style="left:313.4px;top:556.2px;font-size:12px;color:#111;">d</span>
<span class="t " style="left:475.6px;top:556.2px;font-size:12px;color:#111;">d</span>
<span class="t " style="left:508.2px;top:556.2px;font-size:12px;color:#111;transform:scaleX(0.853);">50.00</span>
<span class="t " style="left:583.6px;top:556.2px;font-size:12px;color:#111;transform:scaleX(1.055);">mm</span>
<span class="t " style="left:313.4px;top:575.0px;font-size:12px;color:#111;">a</span>
<span class="t " style="left:475.6px;top:575.0px;font-size:12px;color:#111;">a</span>
<span class="t " style="left:508.2px;top:575.0px;font-size:12px;color:#111;transform:scaleX(0.864);">135.00</span>
<span class="t " style="left:583.6px;top:575.0px;font-size:12px;color:#111;transform:scaleX(1.055);">mm</span>
<span class="t " style="left:313.4px;top:593.8px;font-size:12px;color:#111;">f</span>
<span class="t " style="left:475.6px;top:593.8px;font-size:12px;color:#111;">f</span>
<span class="t " style="left:508.2px;top:593.8px;font-size:12px;color:#111;transform:scaleX(0.864);">135.00</span>
<span class="t " style="left:583.6px;top:593.8px;font-size:12px;color:#111;transform:scaleX(1.055);">mm</span>
<div class="b cb" style="left:304.0px;top:633.6px;width:13.0px;height:13.0px;"></div>
<span class="t " style="left:320.0px;top:632.2px;font-size:12px;color:#111;transform:scaleX(0.956);">Use industry standardized values only</span>
</div>
</body></html>
